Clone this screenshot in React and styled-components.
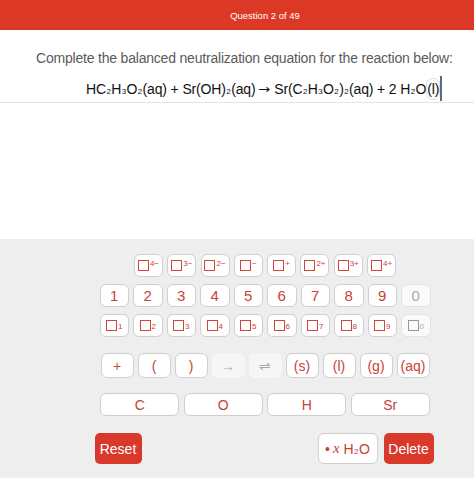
import React from "react";
import styled, { createGlobalStyle } from "styled-components";

const GlobalStyle = createGlobalStyle`
  html, body {
    margin: 0;
    padding: 0;
    background: #fff;
    font-family: "Liberation Sans", Arial, sans-serif;
  }
`;

const charges = ["4−", "3−", "2−", "−", "+", "2+", "3+", "4+"];
const digits = ["1", "2", "3", "4", "5", "6", "7", "8", "9", "0"];
const symbols = [
  { label: "+" },
  { label: "(" },
  { label: ")" },
  { label: "→", off: true },
  { label: "⇌", off: true },
  { label: "(s)" },
  { label: "(l)" },
  { label: "(g)" },
  { label: "(aq)" },
];
const elements = ["C", "O", "H", "Sr"];

export default function App() {
  return (
    <Page>
      <GlobalStyle />
      <Header>Question 2 of 49</Header>
      <Prompt>Complete the balanced neutralization equation for the reaction below:</Prompt>
      <Equation>
        HC<Sub>2</Sub>H<Sub>3</Sub>O<Sub>2</Sub>(aq) + Sr(OH)<Sub>2</Sub>(aq)
        <Arrow>→</Arrow>
        Sr(C<Sub>2</Sub>H<Sub>3</Sub>O<Sub>2</Sub>)<Sub>2</Sub>(aq) + 2 H<Sub>2</Sub>O
        <Selected>(l)</Selected>
        <Caret />
      </Equation>
      <Spacer />
      <Keyboard>
        <KeyRow $cols={8} $w={29} $gap={4.3}>
          {charges.map((c) => (
            <Key key={c}>
              <Box />
              <Sup>{c}</Sup>
            </Key>
          ))}
        </KeyRow>
        <KeyRow $cols={10} $w={29.5}>
          {digits.map((d) => (
            <Key key={d} $off={d === "0"}>
              {d}
            </Key>
          ))}
        </KeyRow>
        <KeyRow $cols={10} $w={29.5}>
          {digits.map((d) => (
            <Key key={d} $off={d === "0"}>
              <Box $off={d === "0"} />
              <SubKey>{d}</SubKey>
            </Key>
          ))}
        </KeyRow>
        <KeyRow $cols={9} $w={33} $h={25} $top={16}>
          {symbols.map((s) => (
            <Key key={s.label} $off={s.off} $flat={s.off} $size={14}>
              {s.label}
            </Key>
          ))}
        </KeyRow>
        <KeyRow $cols={4} $w={79} $top={15} $gap={4.5}>
          {elements.map((e) => (
            <Key key={e} $size={14}>
              {e}
            </Key>
          ))}
        </KeyRow>
        <Actions>
          <RedButton $w={47}>Reset</RedButton>
          <ActionGroup>
            <WaterButton>
              • <Var>x</Var>&nbsp;H<Sub>2</Sub>O
            </WaterButton>
            <RedButton $w={50}>Delete</RedButton>
          </ActionGroup>
        </Actions>
      </Keyboard>
    </Page>
  );
}

const Page = styled.div`
  width: 474px;
  height: 478px;
  display: flex;
  flex-direction: column;
  overflow: hidden;
`;

const Header = styled.div`
  height: 30px;
  flex: none;
  background: #dc3826;
  color: #fff;
  font-size: 9.5px;
  display: flex;
  align-items: center;
  justify-content: center;
  padding-left: 56px;
`;

const Prompt = styled.div`
  margin-top: 19px;
  padding-left: 36px;
  font-size: 14px;
  letter-spacing: -0.2px;
  line-height: 19px;
  color: #5a5a5a;
  white-space: nowrap;
`;

const Equation = styled.div`
  margin-top: 10px;
  padding-left: 86px;
  height: 24px;
  line-height: 22px;
  font-size: 14px;
  letter-spacing: -0.15px;
  color: #111;
  white-space: nowrap;
  border-bottom: 1px solid #e4e4e4;
  display: flex;
  align-items: flex-start;
`;

const Arrow = styled.span`
  font-family: "DejaVu Sans", sans-serif;
  font-size: 12px;
  margin: 0 5px 0 4px;
  transform: scaleX(1.2);
`;

const Sub = styled.span`
  font-size: 8px;
  position: relative;
  top: 3px;
  margin: 0 0.5px;
`;

const Selected = styled.span`
  border: 1px solid #d8dde3;
  border-radius: 8px;
  line-height: 20px;
`;

const Caret = styled.span`
  width: 2px;
  height: 25px;
  margin-top: -2px;
  background: #5b6a80;
`;

const Spacer = styled.div`
  height: 136px;
  flex: none;
`;

const Keyboard = styled.div`
  flex: 1;
  background: #eeeeee;
  padding: 15px 0 0 56px;
  display: flex;
  flex-direction: column;
  align-items: center;
`;

const KeyRow = styled.div`
  display: grid;
  grid-template-columns: repeat(${(p) => p.$cols}, ${(p) => p.$w}px);
  grid-auto-rows: ${(p) => p.$h || 23}px;
  column-gap: ${(p) => p.$gap || 4}px;
  margin-top: ${(p) => (p.$top === undefined ? 7 : p.$top)}px;

  &:first-child {
    margin-top: 0;
  }
`;

const Key = styled.div`
  box-sizing: border-box;
  display: flex;
  align-items: center;
  justify-content: center;
  background: ${(p) => (p.$flat ? "#f6f6f6" : p.$off ? "#fafafa" : "#fff")};
  border: 1px solid ${(p) => (p.$flat ? "#f6f6f6" : p.$off ? "#e2e2e2" : "#cfcfcf")};
  border-radius: 6px;
  color: ${(p) => (p.$off ? "#a8a8a8" : "#c8423a")};
  font-size: ${(p) => p.$size || 15}px;
`;

const Box = styled.span`
  width: 9px;
  height: 9px;
  border: 1px solid ${(p) => (p.$off ? "#999" : "#d0463d")};
`;

const Sup = styled.span`
  font-size: 8px;
  align-self: flex-start;
  margin-top: 4px;
  margin-left: 1px;
`;

const SubKey = styled.span`
  font-size: 8px;
  align-self: flex-end;
  margin-bottom: 5px;
  margin-left: 1px;
`;

const Actions = styled.div`
  width: 339px;
  margin: 17px 0 0 -2px;
  display: flex;
  justify-content: space-between;
`;

const ActionGroup = styled.div`
  display: flex;
  gap: 6px;
`;

const RedButton = styled.div`
  width: ${(p) => p.$w}px;
  height: 31px;
  display: flex;
  align-items: center;
  justify-content: center;
  background: #d9392a;
  border-radius: 5px;
  color: #fff;
  font-size: 14px;
`;

const WaterButton = styled.div`
  box-sizing: border-box;
  height: 31px;
  width: 60px;
  display: flex;
  align-items: center;
  justify-content: center;
  background: #fff;
  border: 1px solid #cfcfcf;
  border-radius: 6px;
  color: #c8423a;
  font-size: 14px;
  white-space: nowrap;
`;

const Var = styled.i`
  font-family: "Liberation Serif", serif;
  font-size: 15px;
  margin-left: 3px;
`;
